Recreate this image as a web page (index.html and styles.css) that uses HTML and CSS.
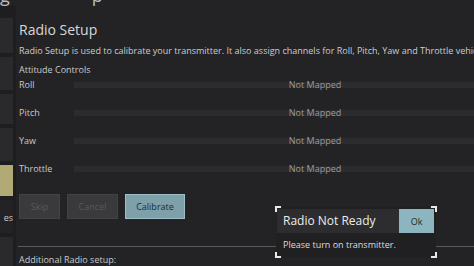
FILE: index.html
```html
<!DOCTYPE html>
<html>
<head>
<meta charset="utf-8">
<link rel="stylesheet" href="styles.css">
</head>
<body>
<div class="app">
  <div class="topbar"><span class="tb-left">g</span><span class="tb-mid">p</span></div>
  <div class="row-main">
    <div class="sidebar">
      <div class="sb-btn b1"></div>
      <div class="sb-btn b2"></div>
      <div class="sb-btn b3"></div>
      <div class="sb-btn b4"></div>
      <div class="sb-btn sel"></div>
      <div class="sb-btn lbl"><span>es</span></div>
      <div class="sb-btn b7"></div>
    </div>
    <div class="divider"></div>
    <div class="main">
      <div class="title">Radio Setup</div>
      <div class="desc">Radio Setup is used to calibrate your transmitter. It also assign channels for Roll, Pitch, Yaw and Throttle vehicle control as well as determining whether you have an RC radio.</div>
      <div class="section">Attitude Controls</div>
      <div class="ctl-row"><div class="ctl-label">Roll</div><div class="ctl-bar"><span>Not Mapped</span></div></div>
      <div class="ctl-row"><div class="ctl-label">Pitch</div><div class="ctl-bar"><span>Not Mapped</span></div></div>
      <div class="ctl-row"><div class="ctl-label">Yaw</div><div class="ctl-bar"><span>Not Mapped</span></div></div>
      <div class="ctl-row"><div class="ctl-label">Throttle</div><div class="ctl-bar"><span>Not Mapped</span></div></div>
      <div class="buttons">
        <div class="btn dis w-skip">Skip</div>
        <div class="btn dis w-cancel">Cancel</div>
        <div class="btn primary w-cal">Calibrate</div>
      </div>
      <div class="hline"></div>
      <div class="additional">Additional Radio setup:</div>
    </div>
  </div>
  <div class="dialog">
    <div class="dlg-head">
      <div class="dlg-title">Radio Not Ready</div>
      <div class="dlg-ok">Ok</div>
    </div>
    <div class="dlg-body">Please turn on transmitter.</div>
    <span class="corner tl"></span><span class="corner tr"></span>
    <span class="corner bl"></span><span class="corner br"></span>
  </div>
</div>
</body>
</html>
```
FILE: styles.css
```css
html, body {
  margin: 0;
  padding: 0;
  background: #232326;
  width: 474px;
  height: 266px;
  overflow: hidden;
  font-family: "Open Sans", "Noto Sans", sans-serif;
  color: #d6d6d6;
}
.app {
  position: relative;
  width: 474px;
  height: 266px;
  overflow: hidden;
}
.topbar {
  height: 6px;
  overflow: hidden;
  position: relative;
  font-size: 18px;
  line-height: 18px;
  color: #bdbdbd;
  display: flex;
}
.tb-left { margin-top: -14px; margin-left: 0; }
.tb-mid { margin-top: -14px; margin-left: 82px; }
.row-main {
  display: flex;
  height: 260px;
}
.sidebar {
  width: 13px;
  flex: none;
  display: flex;
  flex-direction: column;
  gap: 4px;
  padding-top: 12px;
  background: #1e1e21;
}
.sb-btn {
  background: #2a2a2d;
  flex: none;
}
.b1 { height: 35px; }
.b2 { height: 33px; }
.b3 { height: 30px; }
.b4 { height: 33px; }
.sel { height: 31px; background: #b1aa74; }
.lbl {
  height: 33px;
  background: #232326;
  position: relative;
  overflow: hidden;
}
.lbl span {
  position: absolute;
  right: 0;
  top: 13px;
  font-size: 9px;
  line-height: 10px;
  color: #c8c8c8;
}
.b7 { height: 40px; }
.divider {
  width: 3px;
  flex: none;
  background: #1e1e21;
}
.main {
  flex: none;
  width: 560px;
  padding-left: 3px;
  display: flex;
  flex-direction: column;
}
.main > * { flex: none; }
.title {
  margin-top: 13px;
  font-size: 14px;
  line-height: 22px;
  color: #d8d8d8;
}
.desc {
  margin-top: 4px;
  font-size: 9px;
  line-height: 12px;
  white-space: nowrap;
  color: #cccccc;
}
.section {
  margin-top: 7px;
  margin-bottom: -5px;
  font-size: 9px;
  line-height: 12px;
  color: #c9c9c9;
}
.ctl-row {
  display: flex;
  align-items: center;
  height: 28px;
}
.ctl-label {
  width: 55px;
  flex: none;
  font-size: 9px;
  line-height: 12px;
  color: #c9c9c9;
}
.ctl-bar {
  width: 482px;
  flex: none;
  height: 6px;
  background: #2c2c30;
  display: flex;
  align-items: center;
  justify-content: center;
  font-size: 9px;
  line-height: 12px;
  color: #9c9c9c;
}
.buttons {
  display: flex;
  gap: 7px;
  margin-top: 11px;
}
.btn {
  height: 25px;
  box-sizing: border-box;
  display: flex;
  align-items: center;
  justify-content: center;
  font-size: 9px;
  border: 1px solid transparent;
}
.dis {
  background: #3a3a3d;
  border-color: #434346;
  color: #58585b;
}
.primary {
  background: #7ea1a9;
  border-color: #9dbfc7;
  color: #1f2b30;
}
.w-skip { width: 41px; }
.w-cancel { width: 51px; }
.w-cal { width: 60px; }
.hline {
  margin-top: 27px;
  height: 1px;
  background: #5a5a5d;
  margin-left: -1px;
}
.additional {
  margin-top: 7px;
  font-size: 9px;
  line-height: 12px;
  color: #c9c9c9;
}
.dialog {
  position: absolute;
  left: 276px;
  top: 207px;
  width: 160px;
  height: 50px;
  background: #202023;
}
.dlg-head {
  display: flex;
  margin: 2px 2px 0 1px;
  height: 24px;
}
.dlg-title {
  flex: 1;
  background: #2d2d30;
  font-size: 12px;
  line-height: 24px;
  padding-left: 6px;
  color: #ececec;
}
.dlg-ok {
  width: 35px;
  background: #8db5bf;
  color: #1d2a30;
  font-size: 9px;
  display: flex;
  align-items: center;
  justify-content: center;
}
.dlg-body {
  padding-left: 7px;
  margin-top: 6px;
  font-size: 9px;
  line-height: 12px;
  color: #dcdcdc;
}
.corner {
  position: absolute;
  width: 4px;
  height: 4px;
  border-color: #e8e8e8;
  border-style: solid;
  border-width: 0;
}
.tl { left: -1px; top: -1px; border-left-width: 2px; border-top-width: 2px; }
.tr { right: -1px; top: -1px; border-right-width: 2px; border-top-width: 2px; }
.bl { left: -1px; bottom: -1px; border-left-width: 2px; border-bottom-width: 2px; }
.br { right: -1px; bottom: -1px; border-right-width: 2px; border-bottom-width: 2px; }
```
